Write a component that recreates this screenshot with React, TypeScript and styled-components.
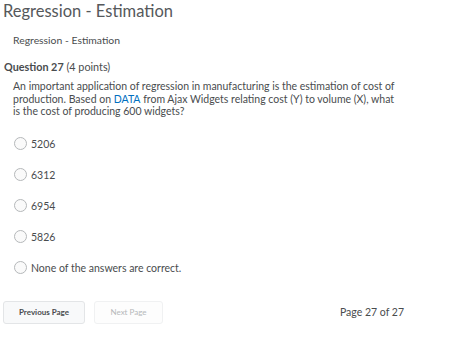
import styled, { createGlobalStyle } from "styled-components";

const GlobalStyle = createGlobalStyle`
  html, body {
    margin: 0;
    padding: 0;
    background: #ffffff;
  }
  body {
    font-family: Lato, "Open Sans", sans-serif;
    color: #494c4e;
  }
`;

const Page = styled.div`
  width: 474px;
  height: 341px;
  overflow: hidden;
  padding: 0 0 0 3px;
  box-sizing: border-box;
`;

const Title = styled.h1`
  margin: 0;
  font-size: 16.5px;
  font-weight: 400;
  line-height: 22px;
  color: #55585b;
`;

const SubTitle = styled.div`
  margin: 11px 0 0 10px;
  font-size: 10.4px;
  line-height: 14px;
  color: #494c4e;
`;

const QuestionHead = styled.div`
  margin-top: 13px;
  margin-left: 1px;
  font-size: 10.8px;
  line-height: 14px;
  color: #494c4e;
  b {
    font-weight: 700;
  }
`;

const QuestionText = styled.p`
  margin: 6px 0 0 10px;
  font-size: 10.5px;
  line-height: 12.6px;
  color: #494c4e;
`;

const Link = styled.a`
  display: inline-block;
  line-height: 12.6px;
  color: #006fbf;
  text-decoration: none;
`;

const Options = styled.div`
  display: flex;
  flex-direction: column;
  gap: 17px;
  margin: 19px 0 0 11px;
`;

const Option = styled.label`
  display: flex;
  align-items: center;
  gap: 4px;
  height: 14px;
  font-size: 10.5px;
  color: #494c4e;
`;

const Radio = styled.span`
  width: 11px;
  height: 11px;
  border-radius: 50%;
  border: 1px solid #b5b8ba;
  background: #fafafa;
  flex-shrink: 0;
`;

const Footer = styled.div`
  display: flex;
  align-items: center;
  margin-top: 26px;
`;

const Button = styled.button<{ $disabled?: boolean; $width: number }>`
  height: 23px;
  padding: 0;
  width: ${(p) => p.$width}px;
  border: 1px solid ${(p) => (p.$disabled ? "#f0f1f2" : "#e3e5e7")};
  border-radius: 3px;
  background: ${(p) => (p.$disabled ? "#fdfdfd" : "#f8f9fa")};
  color: ${(p) => (p.$disabled ? "#b5b8ba" : "#494c4e")};
  font-family: Lato, sans-serif;
  font-size: 8px;
  font-weight: ${(p) => (p.$disabled ? 400 : 700)};
  margin-right: 9px;
`;

const PageCount = styled.div`
  margin-left: auto;
  margin-right: 70px;
  font-size: 10.5px;
  color: #494c4e;
`;

const answers = ["5206", "6312", "6954", "5826", "None of the answers are correct."];

export default function App() {
  return (
    <Page>
      <GlobalStyle />
      <Title>Regression - Estimation</Title>
      <SubTitle>Regression - Estimation</SubTitle>
      <QuestionHead>
        <b>Question 27</b> (4 points)
      </QuestionHead>
      <QuestionText>
        An important application of regression in manufacturing is the estimation of cost of
        <br />
        production. Based on <Link>DATA</Link> from Ajax Widgets relating cost (Y) to volume (X), what
        <br />
        is the cost of producing 600 widgets?
      </QuestionText>
      <Options>
        {answers.map((a) => (
          <Option key={a}>
            <Radio />
            {a}
          </Option>
        ))}
      </Options>
      <Footer>
        <Button $width={82}>Previous Page</Button>
        <Button $width={69} $disabled>
          Next Page
        </Button>
        <PageCount>Page 27 of 27</PageCount>
      </Footer>
    </Page>
  );
}
